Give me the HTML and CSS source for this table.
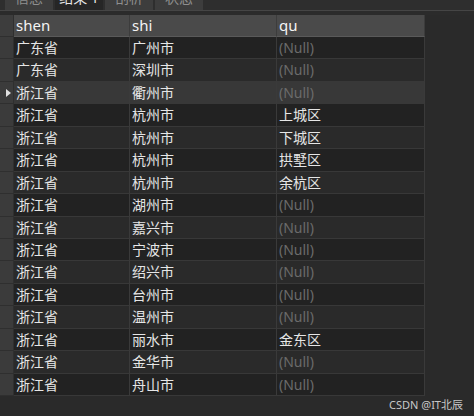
FILE: index.html
```html
<!DOCTYPE html>
<html>
<head>
<meta charset="utf-8">
<link rel="stylesheet" href="styles.css">
</head>
<body>
<div class="app">
  <div class="tabs">
    <div class="tab"><span>信息</span></div>
    <div class="tab active"><span>结果 1</span></div>
    <div class="tab"><span>剖析</span></div>
    <div class="tab"><span>状态</span></div>
  </div>
  <div class="sep"></div>
  <div class="grid">
    <div class="ind hd"></div><div class="cell hd">shen</div><div class="cell hd">shi</div><div class="cell hd">qu</div>

    <div class="ind"></div><div class="cell">广东省</div><div class="cell">广州市</div><div class="cell null">(Null)</div>
    <div class="ind"></div><div class="cell alt">广东省</div><div class="cell alt">深圳市</div><div class="cell alt null">(Null)</div>
    <div class="ind cur"><span class="arrow"></span></div><div class="cell sel">浙江省</div><div class="cell sel">衢州市</div><div class="cell sel null">(Null)</div>
    <div class="ind"></div><div class="cell">浙江省</div><div class="cell">杭州市</div><div class="cell">上城区</div>
    <div class="ind"></div><div class="cell alt">浙江省</div><div class="cell alt">杭州市</div><div class="cell alt">下城区</div>
    <div class="ind"></div><div class="cell">浙江省</div><div class="cell">杭州市</div><div class="cell">拱墅区</div>
    <div class="ind"></div><div class="cell alt">浙江省</div><div class="cell alt">杭州市</div><div class="cell alt">余杭区</div>
    <div class="ind"></div><div class="cell">浙江省</div><div class="cell">湖州市</div><div class="cell null">(Null)</div>
    <div class="ind"></div><div class="cell alt">浙江省</div><div class="cell alt">嘉兴市</div><div class="cell alt null">(Null)</div>
    <div class="ind"></div><div class="cell">浙江省</div><div class="cell">宁波市</div><div class="cell null">(Null)</div>
    <div class="ind"></div><div class="cell alt">浙江省</div><div class="cell alt">绍兴市</div><div class="cell alt null">(Null)</div>
    <div class="ind"></div><div class="cell">浙江省</div><div class="cell">台州市</div><div class="cell null">(Null)</div>
    <div class="ind"></div><div class="cell alt">浙江省</div><div class="cell alt">温州市</div><div class="cell alt null">(Null)</div>
    <div class="ind"></div><div class="cell">浙江省</div><div class="cell">丽水市</div><div class="cell">金东区</div>
    <div class="ind"></div><div class="cell alt">浙江省</div><div class="cell alt">金华市</div><div class="cell alt null">(Null)</div>
    <div class="ind"></div><div class="cell">浙江省</div><div class="cell">舟山市</div><div class="cell null">(Null)</div>
  </div>
  <div class="mark">CSDN @IT北辰</div>
</div>
</body>
</html>
```

FILE: styles.css
```css
html, body {
  margin: 0;
  padding: 0;
  background: #2a2a2a;
}
body {
  width: 474px;
  height: 416px;
  overflow: hidden;
  font-family: "Noto Sans", "Noto Sans CJK SC", sans-serif;
}
.app {
  position: relative;
  width: 474px;
  height: 416px;
  background: #2a2a2a;
}
.tabs {
  display: flex;
  height: 10px;
  overflow: hidden;
  background: #2e2e2e;
  padding-left: 5px;
  gap: 2px;
}
.tab {
  width: 48px;
  height: 10px;
  background: #3d3d3d;
  color: #8f8f8f;
  font-size: 14px;
  overflow: hidden;
  text-align: center;
}
.tab span {
  display: block;
  line-height: 20px;
  margin-top: -12px;
}
.tab.active {
  background: #262626;
  color: #e6e6e6;
}
.sep {
  height: 4px;
  border-top: 1px solid #454545;
  background: #2b2b2b;
}
.grid {
  display: grid;
  grid-template-columns: 14px 116px 147px 148px;
  grid-template-rows: 22px repeat(16, 22.45px);
  width: 425px;
}
.ind {
  background: #3b3b3b;
  border-bottom: 1px solid #2f2f2f;
  border-right: 1px solid #2f2f2f;
  box-sizing: border-box;
  display: flex;
  align-items: center;
  justify-content: center;
}
.ind.hd {
  background: #3d3d3d;
}
.cell {
  box-sizing: border-box;
  background: #222222;
  color: #e6e6e6;
  font-size: 14px;
  line-height: 21px;
  padding-left: 2px;
  border-right: 1px solid #3a3a3a;
  border-bottom: 1px solid #383838;
  white-space: nowrap;
  overflow: hidden;
}
.cell.hd {
  background: #4a4a4a;
  color: #f4f4f4;
  font-size: 15px;
  border-bottom: 1px solid #5a5a5a;
  border-right: 1px solid #3c3c3c;
  line-height: 20px;
}
.cell.alt {
  background: #2a2a2a;
}
.cell.sel {
  background: #383838;
}
.cell.null {
  color: #6b6b6b;
}
.arrow {
  width: 0;
  height: 0;
  border-top: 4px solid transparent;
  border-bottom: 4px solid transparent;
  border-left: 5px solid #e0e0e0;
  margin-left: 3px;
}
.mark {
  position: absolute;
  right: 11px;
  bottom: 4px;
  color: #c8c8c8;
  font-size: 11px;
  font-family: "Noto Sans", "Noto Sans CJK SC", sans-serif;
}
```
